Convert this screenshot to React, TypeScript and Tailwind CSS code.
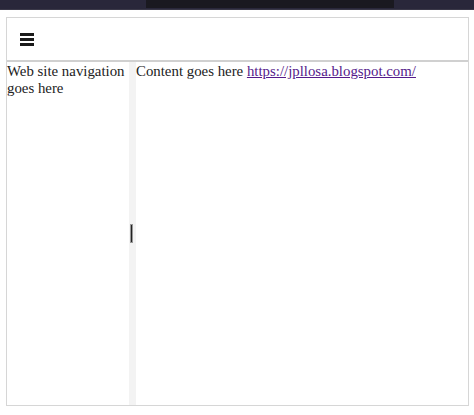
import React from "react";

export default function App() {
  return (
    <div className="w-[474px] h-[415px] bg-white overflow-hidden" style={{ fontFamily: '"Liberation Serif", serif' }}>
      <div className="h-[10px] bg-[#29273a] border-b border-[#3a3848]">
        <div className="ml-[146px] w-[248px] h-[8px] bg-[#1a1920]" />
      </div>
      <div className="pl-[6px] pt-[7px]">
        <div className="w-[463px] h-[389px] border border-[#d6d6d6] flex flex-col">
          <div className="h-[44px] border-b-2 border-[#d0d0d0] flex items-center pl-[13px] shrink-0">
            <div className="flex flex-col gap-[2px] w-[14px]">
              <div className="h-[3px] bg-[#1a1a1a]" />
              <div className="h-[3px] bg-[#1a1a1a]" />
              <div className="h-[3px] bg-[#1a1a1a]" />
            </div>
          </div>
          <div className="flex flex-1 min-h-0">
            <div className="w-[122px] text-[14.85px] leading-[17px] text-[#222] pt-[1px]">
              Web site navigation goes here
            </div>
            <div className="w-[7px] bg-[#f3f3f3] flex items-center justify-start">
              <div className="w-[3px] h-[19px] bg-[#222] border border-[#999] ml-[1px]" />
            </div>
            <div className="flex-1 text-[14.85px] leading-[17px] text-[#222] pt-[1px]">
              Content goes here{" "}
              <a href="#" className="text-[#551a8b] underline">https://jpllosa.blogspot.com/</a>
            </div>
          </div>
        </div>
      </div>
    </div>
  );
}
